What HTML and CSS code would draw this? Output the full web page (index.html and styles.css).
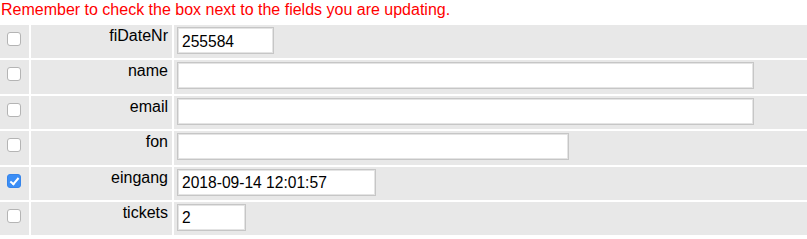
FILE: index.html
```html
<!DOCTYPE html>
<html>

<head>
  <meta charset="utf-8">
  <title>Update record</title>
  <link rel="stylesheet" href="styles.css">
</head>

<body>
  <p class="notice">Remember to check the box next to the fields you are updating.</p>

  <form id="update-form">
    <table class="fields">
      <tr>
        <td class="check"><input type="checkbox" name="upd_fiDateNr"></td>
        <td class="label">fiDateNr</td>
        <td class="value"><input type="text" class="w-nr" name="fiDateNr" value="255584"></td>
      </tr>
      <tr>
        <td class="check"><input type="checkbox" name="upd_name"></td>
        <td class="label">name</td>
        <td class="value"><input type="text" class="w-wide" name="name"></td>
      </tr>
      <tr>
        <td class="check"><input type="checkbox" name="upd_email"></td>
        <td class="label">email</td>
        <td class="value"><input type="text" class="w-wide" name="email"></td>
      </tr>
      <tr>
        <td class="check"><input type="checkbox" name="upd_fon"></td>
        <td class="label">fon</td>
        <td class="value"><input type="text" class="w-mid" name="fon"></td>
      </tr>
      <tr>
        <td class="check"><input type="checkbox" name="upd_eingang" checked></td>
        <td class="label">eingang</td>
        <td class="value"><input type="text" class="w-date" name="eingang" value="2018-09-14 12:01:57"></td>
      </tr>
      <tr>
        <td class="check"><input type="checkbox" name="upd_tickets"></td>
        <td class="label">tickets</td>
        <td class="value"><input type="text" class="w-small" name="tickets" value="2"></td>
      </tr>
    </table>
  </form>
</body>

</html>
```

FILE: styles.css
```css
body {
  font-family: "Liberation Sans", Arial, Helvetica, sans-serif;
  font-size: 16px;
  margin: 0;
  color: #000;
  overflow: hidden;
}

.notice {
  margin: 0;
  padding: 1px 0 0 1px;
  height: 22px;
  color: #ff0000;
}

.fields {
  border-spacing: 2px;
  margin-left: -2px;
  width: calc(100% + 4px);
}

.fields td {
  background-color: #e8e8e8;
  height: 33.4px;
  padding: 0;
  vertical-align: top;
  box-sizing: border-box;
}

.check {
  width: 29px;
}

.label {
  width: 141px;
  text-align: right;
  padding: 2px 4px 0 0 !important;
}

.value {
  padding: 2px 0 0 3px !important;
}

.check input {
  appearance: none;
  -webkit-appearance: none;
  position: relative;
  display: block;
  width: 14px;
  height: 14px;
  margin: 7px 0 0 7px;
  border: 1px solid #b4b4b4;
  border-radius: 3px;
  background-color: #fff;
  box-sizing: border-box;
}

.check input:checked {
  background-color: #3b8ef6;
  border-color: #3584ea;
}

.check input:checked::after {
  content: "";
  position: absolute;
  left: 4px;
  top: 1px;
  width: 3px;
  height: 7px;
  border: solid #fff;
  border-width: 0 2px 2px 0;
  transform: rotate(40deg);
}

.value input {
  display: block;
  height: 27px;
  margin: 0;
  padding: 2px 4px 0;
  border: 1px solid #c6c6c6;
  box-shadow: inset 0 0 0 1px #e4e4e4;
  box-sizing: border-box;
  font-family: "Liberation Sans", Arial, Helvetica, sans-serif;
  font-size: 15.6px;
  color: #000;
  background-color: #fff;
  outline: none;
}

.w-nr {
  width: 97px;
}

.w-wide {
  width: 577px;
}

.w-mid {
  width: 392px;
}

.w-date {
  width: 199px;
}

.w-small {
  width: 69px;
}
```
